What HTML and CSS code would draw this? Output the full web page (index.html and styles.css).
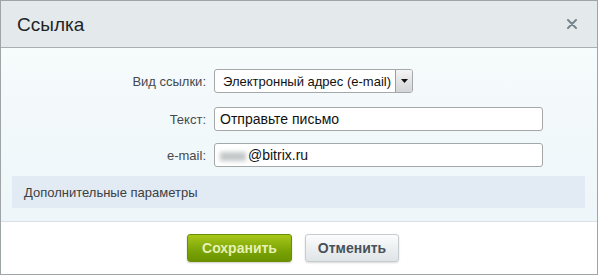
FILE: index.html
```html
<!DOCTYPE html>
<html lang="ru">
<head>
<meta charset="utf-8">
<title>Ссылка</title>
<link rel="stylesheet" href="styles.css">
</head>
<body>
<div class="dialog">
  <div class="header">
    <div class="title">Ссылка</div>
    <svg class="close" width="10" height="10" viewBox="0 0 10 10"><path d="M1 1 L9 9 M9 1 L1 9" stroke="#78848d" stroke-width="2" stroke-linecap="round"/></svg>
  </div>
  <div class="body">
    <div class="form">
      <div class="row row-select">
        <div class="label">Вид ссылки:</div>
        <div class="select">
          <span class="select-text">Электронный адрес (e-mail)</span>
          <span class="select-btn"><svg width="7" height="4" viewBox="0 0 7 4"><path d="M0 0 H7 L3.5 4 Z" fill="#111"/></svg></span>
        </div>
      </div>
      <div class="row">
        <div class="label">Текст:</div>
        <div class="input">Отправьте письмо</div>
      </div>
      <div class="row">
        <div class="label">e-mail:</div>
        <div class="input"><span class="blur"></span>@bitrix.ru</div>
      </div>
    </div>
    <div class="band">Дополнительные параметры</div>
  </div>
  <div class="footer">
    <div class="btn btn-save">Сохранить</div>
    <div class="btn btn-cancel">Отменить</div>
  </div>
</div>
</body>
</html>
```
FILE: styles.css
```css
html, body {
  margin: 0;
  padding: 0;
  background: #fff;
}
body {
  font-family: "Liberation Sans", Arial, sans-serif;
}
.dialog {
  width: 598px;
  height: 275px;
  box-sizing: border-box;
  border: 1px solid #9fa4a7;
  display: flex;
  flex-direction: column;
}
.header {
  height: 46px;
  border-bottom: 1px solid #a9afb2;
  background: #e4eaec;
  display: flex;
  align-items: center;
  justify-content: space-between;
  padding: 0 20px 0 16px;
  flex: none;
}
.title {
  font-size: 19px;
  color: #1f2326;
  padding-top: 1px;
}
.close {
  display: block;
}
.body {
  background: linear-gradient(#f6fbfc, #eef6f9);
  height: 174px;
  border-bottom: 1px solid #d9dfe2;
  flex: none;
  padding-top: 21px;
  box-sizing: border-box;
}
.form {
  display: flex;
  flex-direction: column;
  gap: 12px;
}
.row {
  display: flex;
  align-items: center;
  height: 24px;
}
.row-select {
  margin-bottom: 2px;
}
.label {
  text-align: right;
  font-size: 13px;
  color: #45494d;
  padding-right: 8px;
  box-sizing: border-box;
  width: 213px;
}
.select {
  width: 199px;
  height: 24px;
  box-sizing: border-box;
  border: 1px solid #a4a8ab;
  border-radius: 3px;
  background: #fff;
  display: flex;
  align-items: stretch;
  font-size: 13px;
  color: #111;
}
.select-text {
  flex: 1;
  display: flex;
  align-items: center;
  padding-left: 8px;
}
.select-btn {
  width: 16px;
  border-left: 1px solid #9a9ea1;
  background: linear-gradient(#f4f4f4, #d2d4d6);
  display: flex;
  align-items: center;
  justify-content: center;
  border-radius: 0 2px 2px 0;
}
.select-btn svg {
  display: block;
}
.input {
  width: 329px;
  height: 24px;
  box-sizing: border-box;
  border: 1px solid #a4a8ab;
  border-radius: 3px;
  background: #fff;
  display: flex;
  align-items: center;
  padding-left: 5px;
  font-size: 14px;
  color: #111;
}
.blur {
  display: inline-block;
  width: 26px;
  height: 9px;
  background: #c4c7c9;
  filter: blur(2px);
  margin-right: 2px;
  margin-top: 3px;
}
.band {
  margin: 9px 12px 0 11px;
  height: 32px;
  background: #e2eaf3;
  display: flex;
  align-items: center;
  padding-left: 12px;
  font-size: 13px;
  color: #3a3f43;
}
.footer {
  flex: 1;
  background: #fff;
  display: flex;
  justify-content: center;
  gap: 13px;
  padding: 12px 12px 0 0;
  box-sizing: border-box;
}
.btn {
  height: 28px;
  box-sizing: border-box;
  border-radius: 3px;
  display: flex;
  align-items: center;
  justify-content: center;
  font-size: 14px;
  font-weight: bold;
}
.btn-save {
  width: 105px;
  background: linear-gradient(#a8c71b, #7aa405 60%, #6b9300);
  border: 1px solid #6a8f06;
  color: #e6f1b6;
  box-shadow: 0 1px 2px rgba(0,0,0,0.2);
}
.btn-cancel {
  width: 94px;
  background: linear-gradient(#fbfcfc, #dfe4e7);
  border: 1px solid #c6cbcf;
  color: #48525a;
  box-shadow: 0 1px 2px rgba(0,0,0,0.15);
}
```
